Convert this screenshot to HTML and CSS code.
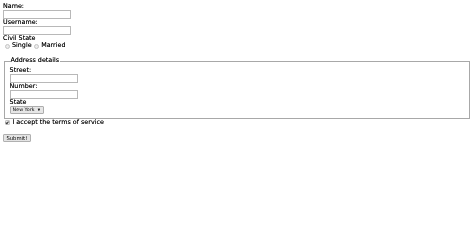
FILE: index.html
```html
<!DOCTYPE html>
<html>
<head>
<meta charset="utf-8">
<link rel="stylesheet" href="styles.css">
</head>
<body>
<form class="form">
  <label class="line" for="name">Name:</label>
  <input type="text" id="name" class="field">
  <label class="line" for="username">Username:</label>
  <input type="text" id="username" class="field">
  <div class="line">Civil State</div>
  <div class="radios">
    <label class="choice"><input type="radio" name="civil" class="radio"> Single</label>
    <label class="choice"><input type="radio" name="civil" class="radio"> Married</label>
  </div>
  <fieldset class="address">
    <legend class="legend">Address details</legend>
    <label class="line" for="street">Street:</label>
    <input type="text" id="street" class="field">
    <label class="line" for="number">Number:</label>
    <input type="text" id="number" class="field">
    <label class="line" for="state">State</label>
    <span class="select-wrap"><select id="state" class="state"><option>New York</option></select></span>
  </fieldset>
  <label class="terms"><input type="checkbox" class="check" checked> I accept the terms of service</label>
  <button type="button" class="submit">Submit!</button>
</form>
</body>
</html>
```

FILE: styles.css
```css
html {
  background: #fff;
}
body {
  margin: 3px;
  font-family: "DejaVu Sans", sans-serif;
  font-size: 6.4px;
  line-height: 7.45px;
  color: #000;
}
.form {
  display: flex;
  flex-direction: column;
  align-items: flex-start;
  will-change: transform;
  text-shadow: 0 0 0.2px rgba(0, 0, 0, 0.6);
}
.line {
  display: block;
  height: 7.45px;
}
.field {
  display: block;
  box-sizing: border-box;
  width: 68px;
  height: 8.5px;
  margin: 0;
  padding: 0 1px;
  border: 1px solid #b8b8b8;
  background: #fff;
  font-family: "DejaVu Sans", sans-serif;
  font-size: 5.3px;
}
.radios {
  display: flex;
  align-items: center;
  height: 7.6px;
  margin-bottom: 7.45px;
}
.choice {
  display: flex;
  align-items: center;
  margin-right: 0.5px;
}
.radio {
  appearance: none;
  box-sizing: border-box;
  width: 5.2px;
  height: 5.2px;
  margin: 0 1.8px 0 2px;
  border: 1px solid #c4c4c4;
  border-radius: 50%;
  background: #ececec;
}
.address {
  align-self: stretch;
  margin: 0 0.8px;
  padding: 2.2px 4.8px 4px;
  border: 1px solid #a8a8a8;
  display: flex;
  flex-direction: column;
  align-items: flex-start;
}
.legend {
  padding: 0 0.8px;
  height: 7.45px;
}
.select-wrap {
  position: relative;
  display: block;
}
.state {
  appearance: none;
  box-sizing: border-box;
  width: 34px;
  height: 7.5px;
  margin: 0;
  padding: 0 0 0 2px;
  border: 1px solid #adadad;
  border-radius: 1px;
  background: #e6e6e6;
  color: #000;
  font-family: "DejaVu Sans", sans-serif;
  font-size: 4.8px;
  line-height: 5.5px;
}
.select-wrap::after {
  content: "▾";
  position: absolute;
  right: 3.5px;
  top: 0.5px;
  font-size: 4.6px;
  line-height: 6.5px;
  color: #222;
  pointer-events: none;
}
.terms {
  display: flex;
  align-items: center;
  height: 8px;
  margin-bottom: 7.45px;
}
.check {
  appearance: none;
  position: relative;
  box-sizing: border-box;
  width: 5.2px;
  height: 5.2px;
  margin: 0 2.6px 0 1.6px;
  border: 1px solid #c4c4c4;
  border-radius: 1px;
  background: #ececec;
}
.check:checked::after {
  content: "";
  position: absolute;
  left: 0.9px;
  top: 0px;
  width: 1.2px;
  height: 2.4px;
  border: solid #333;
  border-width: 0 1px 1px 0;
  transform: rotate(40deg);
}
.submit {
  box-sizing: border-box;
  height: 8px;
  margin: 0;
  padding: 0 2.4px;
  border: 1px solid #b0b0b0;
  border-radius: 1px;
  background: #e4e4e4;
  color: #000;
  font-family: "DejaVu Sans", sans-serif;
  font-size: 5.3px;
  line-height: 6px;
}
```
